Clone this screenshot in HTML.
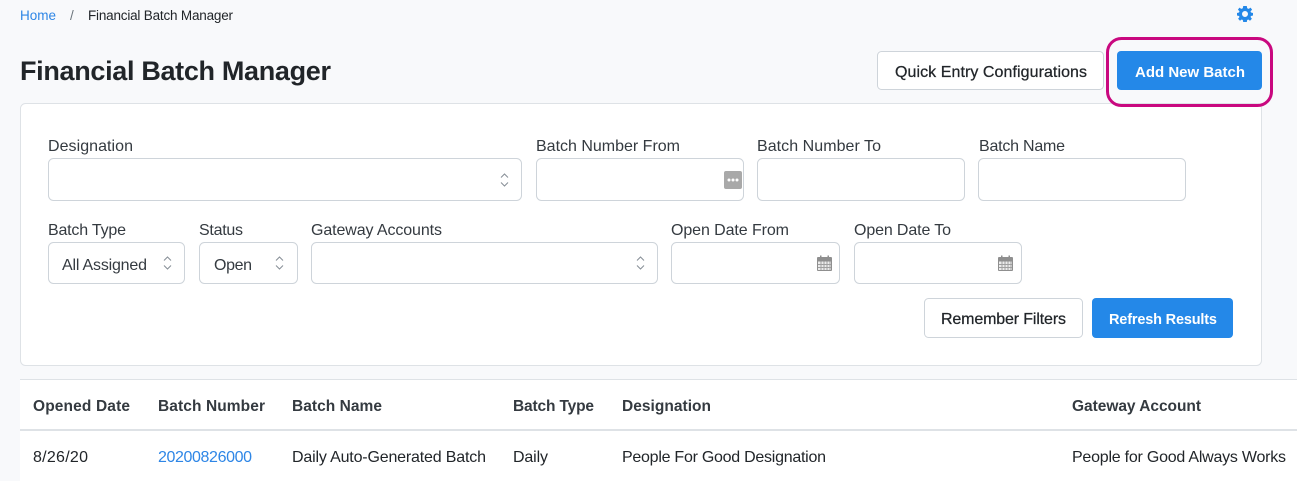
<!DOCTYPE html>
<html lang="en">
<head>
<meta charset="utf-8">
<title>Financial Batch Manager</title>
<style>
html,body{margin:0;padding:0;width:1297px;height:481px;overflow:hidden;background:#f8f9fb}
svg{display:block;font-family:"Liberation Sans",Arial,sans-serif}
text{font-size:16px;fill:#212529}
.l{fill:#343a40}
.h{font-weight:700;fill:#343a40;font-size:15.500px}
.b{font-weight:700;font-size:15px}
.w{fill:#fff}
.inp{fill:#fff;stroke:#ced4da}
.c{fill:none;stroke:#868e96;stroke-width:1}
</style>
</head>
<body>
<svg width="1297" height="481" viewBox="0 0 1297 481" xmlns="http://www.w3.org/2000/svg">
<defs>
<g id="chev"><path class="c" d="M-3.500 -2.500L0 -6L3.500 -2.500M-3.500 2.500L0 6L3.500 2.500"/></g>
<g id="cal" fill="#8f8f8f">
<rect x="0" y="2" width="15" height="14" rx="1"/>
<rect x="3" y="0.500" width="1.500" height="2.500"/><rect x="10.500" y="0.500" width="1.500" height="2.500"/>
<rect x="1" y="6.500" width="13" height="8.500" fill="#ececec"/>
<path d="M4 6.500V15M7 6.500V15M10 6.500V15M13 6.500V15M1 9.500H14M1 12.500H14" stroke="#a0a0a0" stroke-width="1" fill="none"/>
</g>
</defs>

<text x="20" y="20" style="font-size:13.500px;fill:#2e86e6" textLength="36" lengthAdjust="spacing">Home</text>
<text x="70" y="20" style="font-size:13.500px;fill:#6c757d">/</text>
<text x="88" y="20" style="font-size:13.500px" textLength="145" lengthAdjust="spacing">Financial Batch Manager</text>

<g transform="translate(1245,14)" fill="#2488e8">
<path fill-rule="evenodd" d="M-1.800-8H1.800L2.200-5.700L3.700-5.100L5.600-6.400L7.100-4.300L5.500-2.700L6-1.500L8-1V1.500L6 2L5.500 3L6.900 4.800L5 6.800L3.300 5.500L2.200 6L1.800 8H-1.800L-2.200 6L-3.300 5.500L-5 6.800L-6.900 4.800L-5.500 3L-6 2L-8 1.500V-1L-6-1.500L-5.500-2.700L-7.100-4.300L-5.600-6.400L-3.700-5.100L-2.200-5.700ZM0-3A3 3 0 1 0 0 3A3 3 0 1 0 0-3Z"/>
</g>

<text x="20" y="80" style="font-size:27px;font-weight:700;fill:#212529" textLength="311" lengthAdjust="spacing">Financial Batch Manager</text>

<rect x="877.500" y="51.500" width="226" height="38" rx="4" fill="#fff" stroke="#ced4da"/>
<text x="895" y="77" style="stroke:#212529;stroke-width:.25" textLength="192" lengthAdjust="spacing">Quick Entry Configurations</text>
<rect x="1117" y="51" width="145" height="39" rx="4" fill="#2488e8"/>
<text class="b w" x="1135" y="77" textLength="110" lengthAdjust="spacing">Add New Batch</text>

<rect x="20.500" y="103.500" width="1241" height="262" rx="5" fill="#fff" stroke="#dee2e6"/>
<rect x="1107.500" y="38.500" width="164" height="67" rx="14" fill="none" stroke="#c9087f" stroke-width="3"/>

<text class="l" x="48" y="151" textLength="85" lengthAdjust="spacing">Designation</text>
<text class="l" x="536" y="151" textLength="144" lengthAdjust="spacing">Batch Number From</text>
<text class="l" x="757" y="151" textLength="124" lengthAdjust="spacing">Batch Number To</text>
<text class="l" x="979" y="151" textLength="86" lengthAdjust="spacing">Batch Name</text>

<rect class="inp" x="48.500" y="158.500" width="473" height="42" rx="5"/>
<use href="#chev" x="504.500" y="180"/>
<rect class="inp" x="536.500" y="158.500" width="207" height="42" rx="5"/>
<rect x="724" y="171" width="18" height="18" rx="2" fill="#a9a9a9"/>
<circle cx="729" cy="180" r="1.500" fill="#fff"/><circle cx="733" cy="180" r="1.500" fill="#fff"/><circle cx="737" cy="180" r="1.500" fill="#fff"/>
<rect class="inp" x="757.500" y="158.500" width="207" height="42" rx="5"/>
<rect class="inp" x="978.500" y="158.500" width="207" height="42" rx="5"/>

<text class="l" x="48" y="235" textLength="78" lengthAdjust="spacing">Batch Type</text>
<text class="l" x="199" y="235" textLength="44" lengthAdjust="spacing">Status</text>
<text class="l" x="311" y="235" textLength="131" lengthAdjust="spacing">Gateway Accounts</text>
<text class="l" x="671" y="235" textLength="118" lengthAdjust="spacing">Open Date From</text>
<text class="l" x="854" y="235" textLength="97" lengthAdjust="spacing">Open Date To</text>

<rect class="inp" x="48.500" y="242.500" width="136" height="41" rx="5"/>
<text class="l" x="62" y="270" textLength="85" lengthAdjust="spacing">All Assigned</text>
<use href="#chev" x="167.500" y="263"/>
<rect class="inp" x="199.500" y="242.500" width="98" height="41" rx="5"/>
<text class="l" x="214" y="270" textLength="38" lengthAdjust="spacing">Open</text>
<use href="#chev" x="279.500" y="263"/>
<rect class="inp" x="311.500" y="242.500" width="346" height="41" rx="5"/>
<use href="#chev" x="640.500" y="263"/>
<rect class="inp" x="671.500" y="242.500" width="168" height="41" rx="5"/>
<use href="#cal" x="817" y="255"/>
<rect class="inp" x="854.500" y="242.500" width="167" height="41" rx="5"/>
<use href="#cal" x="998" y="255"/>

<rect x="924.500" y="298.500" width="158" height="39" rx="4" fill="#fff" stroke="#ced4da"/>
<text x="941" y="324" style="stroke:#212529;stroke-width:.25" textLength="125" lengthAdjust="spacing">Remember Filters</text>
<rect x="1092" y="298" width="141" height="40" rx="4" fill="#2488e8"/>
<text class="b w" x="1109" y="324" style="font-size:14.500px" textLength="108" lengthAdjust="spacing">Refresh Results</text>

<rect x="20" y="379" width="1277" height="102" fill="#fff"/>
<rect x="20" y="379" width="1277" height="1" fill="#dee2e6"/>
<rect x="20" y="429" width="1277" height="2" fill="#dee2e6"/>

<text class="h" x="33" y="411" textLength="97" lengthAdjust="spacing">Opened Date</text>
<text class="h" x="158" y="411" textLength="107" lengthAdjust="spacing">Batch Number</text>
<text class="h" x="292" y="411" textLength="90" lengthAdjust="spacing">Batch Name</text>
<text class="h" x="513" y="411" textLength="81" lengthAdjust="spacing">Batch Type</text>
<text class="h" x="622" y="411" textLength="89" lengthAdjust="spacing">Designation</text>
<text class="h" x="1072" y="411" textLength="129" lengthAdjust="spacing">Gateway Account</text>

<text x="33" y="462" textLength="55" lengthAdjust="spacing">8/26/20</text>
<text x="158" y="462" style="fill:#2e86e6" textLength="94" lengthAdjust="spacing">20200826000</text>
<text x="292" y="462" textLength="194" lengthAdjust="spacing">Daily Auto-Generated Batch</text>
<text x="513" y="462" textLength="35" lengthAdjust="spacing">Daily</text>
<text x="622" y="462" textLength="204" lengthAdjust="spacing">People For Good Designation</text>
<text x="1072" y="462" textLength="214" lengthAdjust="spacing">People for Good Always Works</text>
</svg>
</body>
</html>
